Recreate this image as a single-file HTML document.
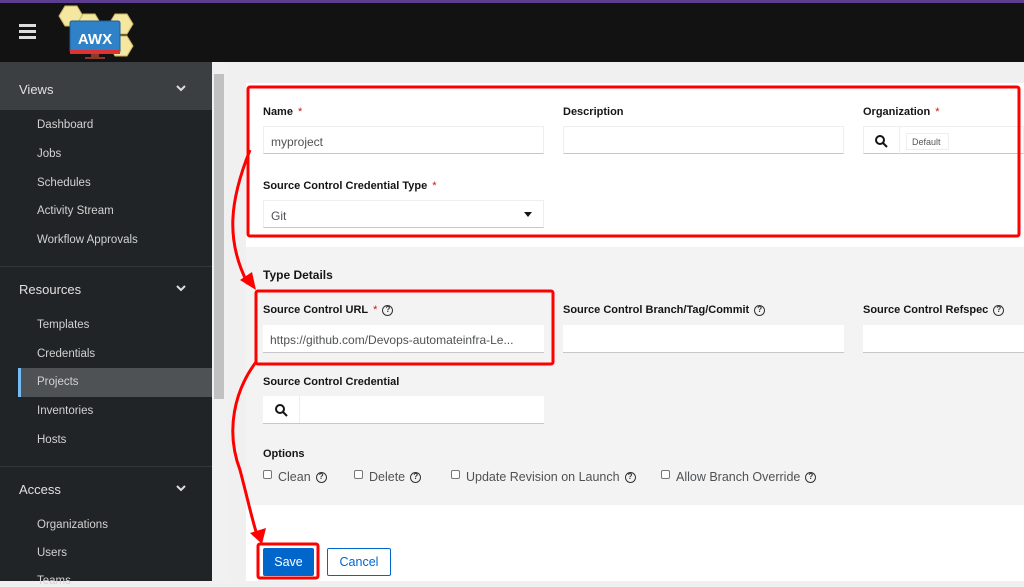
<!DOCTYPE html>
<html><head><meta charset="utf-8"><style>
*{box-sizing:border-box;margin:0;padding:0}
body{width:1024px;height:581px;overflow:hidden;background:#f0f0f0;font-family:"Liberation Sans",sans-serif;position:relative}
.a{position:absolute}
.nav{color:#d2d2d2;font-size:11.5px}
.sh{color:#e0e0e0;font-size:13px}
.lbl{font-size:11px;font-weight:bold;color:#151515}
.req{color:#c9190b;margin-left:5px;font-weight:normal}
.inp{background:#fff;border-bottom:1px solid #c7c7c7;height:28px;font-size:12px;color:#4f5255;padding:8px 7px}
.q{display:inline-block;width:11px;height:11px;border:1.5px solid #333;border-radius:50%;font-size:8px;text-align:center;line-height:8px;vertical-align:middle;margin-left:5px;font-weight:bold;color:#333}
.opt{font-size:12.5px;color:#4f5255}
.cb{display:inline-block;width:9px;height:9px;border:1px solid #777;border-radius:2px;background:#fff;margin-right:6px;vertical-align:2px}
</style></head><body>
<div class="a" style="left:0;top:0;width:1024px;height:3px;background:#5c3d8f"></div>
<div class="a" style="left:0;top:3px;width:1024px;height:59px;background:#121212"></div>
<div class="a" style="left:19px;top:24px;width:17px;height:3px;background:#ddd;box-shadow:0 6px 0 #ddd,0 12px 0 #ddd"></div>
<svg class="a" style="left:55px;top:4px" width="80" height="56">
<polygon points="10,2 22,2 28,12 22,22 10,22 4,12" fill="#f5e6a0" stroke="#c9b563"/>
<polygon points="28,10 40,10 46,20 40,30 28,30 22,20" fill="#f5e6a0" stroke="#c9b563"/>
<polygon points="60,10 72,10 78,20 72,30 60,30 54,20" fill="#f5e6a0" stroke="#c9b563"/>
<polygon points="60,32 72,32 78,42 72,52 60,52 54,42" fill="#f5e6a0" stroke="#c9b563"/>
<rect x="15" y="17" width="50" height="32" rx="2" fill="#2f82c8" stroke="#1c5f99"/>
<rect x="15" y="46" width="50" height="4" fill="#d33"/>
<rect x="36" y="50" width="8" height="3" fill="#8a3a2a"/><rect x="30" y="53" width="20" height="2" fill="#8a3a2a"/>
<text x="40" y="40" font-family="Liberation Sans" font-weight="bold" font-size="15" fill="#fff" text-anchor="middle">AWX</text>
</svg>
<div class="a" style="left:0;top:62px;width:212px;height:519px;background:#212427"></div>
<div class="a" style="left:0;top:62px;width:212px;height:48px;background:#3c3f42"></div>
<div class="a" style="left:212px;top:62px;width:14px;height:519px;background:#f1f1f1"></div>
<div class="a" style="left:214px;top:74px;width:10px;height:325px;background:#c1c1c1"></div>
<div class="a sh" style="left:19px;top:82px">Views</div>
<div class="a sh" style="left:19px;top:282px">Resources</div>
<div class="a sh" style="left:19px;top:482px">Access</div>
<svg class="a" style="left:175px;top:84px" width="12" height="210"><path d="M2 2l4 4 4-4M2 202l4 4 4-4" stroke="#ddd" stroke-width="2" fill="none"/></svg>
<svg class="a" style="left:175px;top:484px" width="12" height="10"><path d="M2 2l4 4 4-4" stroke="#ddd" stroke-width="2" fill="none"/></svg>
<div class="a" style="left:0;top:266px;width:212px;height:1px;background:#33363a"></div>
<div class="a" style="left:0;top:466px;width:212px;height:1px;background:#33363a"></div>
<div class="a" style="left:18px;top:368px;width:194px;height:29px;background:#4f5255;border-left:3px solid #73bcf7"></div>
<div class="a nav" style="left:37px;top:119px">Dashboard</div>
<div class="a nav" style="left:37px;top:148px">Jobs</div>
<div class="a nav" style="left:37px;top:177px">Schedules</div>
<div class="a nav" style="left:37px;top:205px">Activity Stream</div>
<div class="a nav" style="left:37px;top:234px">Workflow Approvals</div>
<div class="a nav" style="left:37px;top:319px">Templates</div>
<div class="a nav" style="left:37px;top:348px">Credentials</div>
<div class="a nav" style="left:37px;top:376px">Projects</div>
<div class="a nav" style="left:37px;top:405px">Inventories</div>
<div class="a nav" style="left:37px;top:434px">Hosts</div>
<div class="a nav" style="left:37px;top:519px">Organizations</div>
<div class="a nav" style="left:37px;top:547px">Users</div>
<div class="a nav" style="left:37px;top:575px">Teams</div>

<div class="a" style="left:246px;top:83px;width:778px;height:164px;background:#fff"></div>
<div class="a" style="left:246px;top:247px;width:778px;height:258px;background:#f3f3f3"></div>
<div class="a" style="left:246px;top:505px;width:778px;height:76px;background:#fff"></div>

<div class="a lbl" style="left:263px;top:106px">Name<span class="req">*</span></div>
<div class="a inp" style="left:263px;top:126px;width:281px;border:1px solid #eee;border-bottom-color:#c7c7c7">myproject</div>
<div class="a lbl" style="left:563px;top:106px">Description</div>
<div class="a inp" style="left:563px;top:126px;width:281px;border:1px solid #eee;border-bottom-color:#c7c7c7"></div>
<div class="a lbl" style="left:863px;top:106px">Organization<span class="req">*</span></div>
<div class="a inp" style="left:863px;top:126px;width:161px;border:1px solid #eee;border-bottom-color:#c7c7c7;padding:0"></div>
<div class="a" style="left:899px;top:127px;width:1px;height:28px;background:#eee"></div>
<div class="a" style="left:906px;top:133px;width:43px;height:17px;border:1px solid #eee;font-size:9px;color:#555;padding:3px 5px">Default</div>
<div class="a lbl" style="left:263px;top:180px">Source Control Credential Type<span class="req">*</span></div>
<div class="a inp" style="left:263px;top:200px;width:281px;border:1px solid #eee;border-bottom-color:#c7c7c7">Git</div>
<div class="a" style="left:524px;top:212px;border:4px solid transparent;border-top:5px solid #151515"></div>

<div class="a" style="left:263px;top:268px;font-size:12px;font-weight:bold;color:#151515">Type Details</div>
<div class="a lbl" style="left:263px;top:304px">Source Control URL<span class="req">*</span><span class="q">?</span></div>
<div class="a inp" style="left:263px;top:325px;width:281px">https://github.com/Devops-automateinfra-Le...</div>
<div class="a lbl" style="left:563px;top:304px">Source Control Branch/Tag/Commit<span class="q">?</span></div>
<div class="a inp" style="left:563px;top:325px;width:281px"></div>
<div class="a lbl" style="left:863px;top:304px">Source Control Refspec<span class="q">?</span></div>
<div class="a inp" style="left:863px;top:325px;width:161px"></div>
<div class="a lbl" style="left:263px;top:376px">Source Control Credential</div>
<div class="a inp" style="left:263px;top:396px;width:281px"></div>
<div class="a" style="left:299px;top:396px;width:1px;height:27px;background:#eee"></div>
<div class="a lbl" style="left:263px;top:448px">Options</div>
<div class="a opt" style="left:263px;top:470px"><span class="cb"></span>Clean<span class="q">?</span></div>
<div class="a opt" style="left:354px;top:470px"><span class="cb"></span>Delete<span class="q">?</span></div>
<div class="a opt" style="left:451px;top:470px"><span class="cb"></span>Update Revision on Launch<span class="q">?</span></div>
<div class="a opt" style="left:661px;top:470px"><span class="cb"></span>Allow Branch Override<span class="q">?</span></div>

<svg class="a" style="left:0;top:0" width="1024" height="581">
<g stroke="#151515" stroke-width="2" fill="none"><circle cx="880" cy="140" r="4"/><path d="M883 143l4 4"/><circle cx="280" cy="409" r="4"/><path d="M283 412l4 4"/></g>
</svg>
<div class="a" style="left:263px;top:548px;width:51px;height:28px;background:#06c;color:#fff;font-size:12.5px;text-align:center;line-height:28px;border-radius:2px">Save</div>
<div class="a" style="left:327px;top:548px;width:64px;height:28px;border:1px solid #06c;color:#06c;font-size:12.5px;text-align:center;line-height:26px;border-radius:2px;background:#fff">Cancel</div>

<svg class="a" style="left:0;top:0" width="1024" height="581">
<g stroke="#f00" stroke-width="3" fill="none">
<rect x="248" y="87" width="771" height="149" rx="2"/>
<rect x="256" y="291" width="297" height="73" rx="2"/>
<rect x="258" y="544" width="60" height="34" rx="2"/>
<path d="M250 150 C 230 200, 225 240, 248 284"/>
<path d="M256 362 C 235 390, 225 430, 240 470 C 248 500, 252 520, 258 538"/>
</g>
<g fill="#f00"><polygon points="240,280 256,290 252,272"/><polygon points="250,533 262,544 266,528"/></g>
</svg>
</body></html>
